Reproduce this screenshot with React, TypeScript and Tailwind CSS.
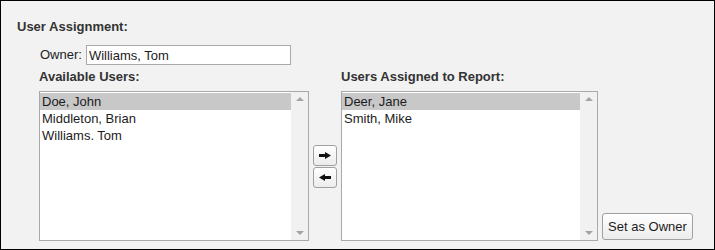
import React from 'react';

const available = ['Doe, John', 'Middleton, Brian', 'Williams. Tom'];
const assigned = ['Deer, Jane', 'Smith, Mike'];

const Arrow = ({ dir }: { dir: 'right' | 'left' }) => (
    <svg width="12" height="7" viewBox="0 0 12 7" className={dir === 'left' ? 'rotate-180' : ''}>
        <path d="M0 2h7v3H0z M6 0L12 3.5 6 7z" fill="#111" />
    </svg>
);

const ListBox = ({ items, width }: { items: string[]; width: string }) => (
    <div className={`flex h-[150px] border border-[#a9a9a9] bg-white ${width}`}>
        <div className="flex flex-1 flex-col pt-px">
            {items.map((item, i) => (
                <div
                    key={item}
                    className={`h-[17px] pl-[2px] text-[13px] leading-[17px] text-[#1c1c1c] ${i === 0 ? 'bg-[#c8c8c8]' : ''}`}
                >
                    {item}
                </div>
            ))}
        </div>
        <div className="flex w-[17px] flex-col items-center justify-between bg-[#f1f1f1] py-[5px]">
            <div className="h-0 w-0 border-x-[4px] border-b-[4px] border-x-transparent border-b-[#a3a3a3]"></div>
            <div className="h-0 w-0 border-x-[4px] border-t-[4px] border-x-transparent border-t-[#a3a3a3]"></div>
        </div>
    </div>
);

const App = () => {
    return (
        <div
            className="h-[250px] w-[715px] border border-black bg-[#f2f2f2] pl-[16px] pt-[18px] text-[#333]"
            style={{ fontFamily: '"Liberation Sans", Arial, sans-serif' }}
        >
            <h2 className="text-[13px] font-bold leading-[15px]">User Assignment:</h2>

            <div className="ml-[23px] mt-[11px] flex items-center gap-[4px]">
                <label className="text-[13px] text-[#222]">Owner:</label>
                <input
                    defaultValue="Williams, Tom"
                    className="h-[20px] w-[205px] border border-[#a9a9a9] bg-white px-[2px] text-[13px] text-[#1c1c1c] outline-none"
                />
            </div>

            <div className="ml-[22px] mt-[4px] flex">
                <div className="flex flex-col">
                    <p className="text-[13px] font-bold leading-[15px]">Available Users:</p>
                    <div className="mt-[7px]">
                        <ListBox items={available} width="w-[270px]" />
                    </div>
                </div>

                <div className="ml-[4px] mt-[22px] flex h-[150px] flex-col justify-center gap-px">
                    <button className="flex h-[21px] w-[24px] items-center justify-center rounded-[3px] border border-[#a0a0a0] bg-gradient-to-b from-white to-[#ececec]">
                        <Arrow dir="right" />
                    </button>
                    <button className="flex h-[21px] w-[24px] items-center justify-center rounded-[3px] border border-[#a0a0a0] bg-gradient-to-b from-white to-[#ececec]">
                        <Arrow dir="left" />
                    </button>
                </div>

                <div className="ml-[4px] flex flex-col">
                    <p className="text-[13px] font-bold leading-[15px]">Users Assigned to Report:</p>
                    <div className="mt-[7px]">
                        <ListBox items={assigned} width="w-[257px]" />
                    </div>
                </div>

                <button className="mb-[1px] ml-[4px] h-[27px] w-[91px] self-end rounded-[3px] border border-[#a0a0a0] bg-gradient-to-b from-white to-[#ececec] text-[13px] text-[#1c1c1c]">
                    Set as Owner
                </button>
            </div>
        </div>
    );
};

export default App;
